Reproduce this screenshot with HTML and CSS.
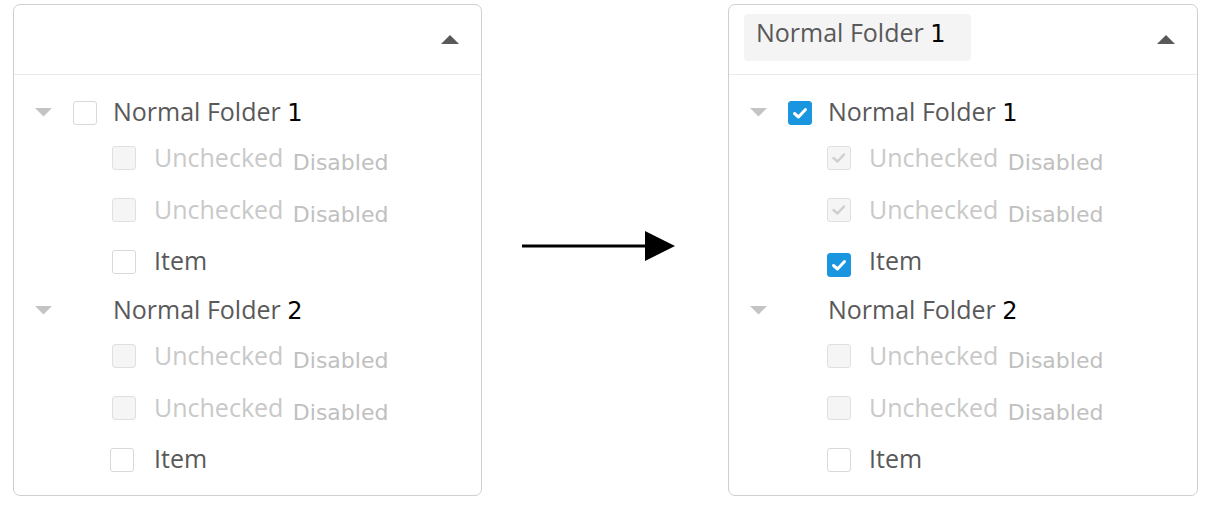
FILE: index.html
```html
<!DOCTYPE html>
<html>
<head>
<meta charset="utf-8">
<link rel="stylesheet" href="styles.css">
</head>
<body>
<div class="stage">
  <div class="panel">
    <div class="head">
      <div class="head-value"></div>
      <svg class="caret-up" width="18" height="10" viewBox="0 0 18 10"><path d="M0 10 L9 1 L18 10 Z" fill="#595959"/></svg>
    </div>
    <div class="tree">
      <div class="row folder">
        <svg class="caret-down" width="17" height="9" viewBox="0 0 17 9"><path d="M0 0 L17 0 L8.5 8.5 Z" fill="#c4c4c4"/></svg>
        <span class="cb"></span>
        <span class="label">Normal Folder <span class="num">1</span></span>
      </div>
      <div class="row child">
        <span class="cb dis"></span>
        <span class="label off">Unchecked <span class="dlab">Disabled</span></span>
      </div>
      <div class="row child">
        <span class="cb dis"></span>
        <span class="label off">Unchecked <span class="dlab">Disabled</span></span>
      </div>
      <div class="row child">
        <span class="cb"></span>
        <span class="label">Item</span>
      </div>
      <div class="row folder">
        <svg class="caret-down" width="17" height="9" viewBox="0 0 17 9"><path d="M0 0 L17 0 L8.5 8.5 Z" fill="#c4c4c4"/></svg>
        <span class="cb none"></span>
        <span class="label">Normal Folder <span class="num">2</span></span>
      </div>
      <div class="row child">
        <span class="cb dis"></span>
        <span class="label off">Unchecked <span class="dlab">Disabled</span></span>
      </div>
      <div class="row child">
        <span class="cb dis"></span>
        <span class="label off">Unchecked <span class="dlab">Disabled</span></span>
      </div>
      <div class="row child shift">
        <span class="cb"></span>
        <span class="label">Item</span>
      </div>
    </div>
  </div>

  <svg class="arrow" width="155" height="32" viewBox="0 0 155 32"><rect x="0" y="14.5" width="125" height="3" fill="#000"/><path d="M123 1 L153 16 L123 31 Z" fill="#000"/></svg>

  <div class="panel wide">
    <div class="head">
      <div class="head-value"><span class="tag">Normal Folder <span class="num">1</span></span></div>
      <svg class="caret-up" width="18" height="10" viewBox="0 0 18 10"><path d="M0 10 L9 1 L18 10 Z" fill="#595959"/></svg>
    </div>
    <div class="tree">
      <div class="row folder">
        <svg class="caret-down" width="17" height="9" viewBox="0 0 17 9"><path d="M0 0 L17 0 L8.5 8.5 Z" fill="#c4c4c4"/></svg>
        <span class="cb on"><svg width="24" height="24" viewBox="0 0 24 24"><path d="M6.5 12.5 L10.5 16 L17.5 8.5" fill="none" stroke="#fff" stroke-width="3" stroke-linecap="round" stroke-linejoin="round"/></svg></span>
        <span class="label">Normal Folder <span class="num">1</span></span>
      </div>
      <div class="row child">
        <span class="cb dis"><svg width="24" height="24" viewBox="0 0 24 24"><path d="M6.5 12 L10.5 15.5 L17 8.5" fill="none" stroke="#cfcfcf" stroke-width="2.5" stroke-linecap="round" stroke-linejoin="round"/></svg></span>
        <span class="label off">Unchecked <span class="dlab">Disabled</span></span>
      </div>
      <div class="row child">
        <span class="cb dis"><svg width="24" height="24" viewBox="0 0 24 24"><path d="M6.5 12 L10.5 15.5 L17 8.5" fill="none" stroke="#cfcfcf" stroke-width="2.5" stroke-linecap="round" stroke-linejoin="round"/></svg></span>
        <span class="label off">Unchecked <span class="dlab">Disabled</span></span>
      </div>
      <div class="row child">
        <span class="cb on low"><svg width="24" height="24" viewBox="0 0 24 24"><path d="M6.5 12.5 L10.5 16 L17.5 8.5" fill="none" stroke="#fff" stroke-width="3" stroke-linecap="round" stroke-linejoin="round"/></svg></span>
        <span class="label">Item</span>
      </div>
      <div class="row folder">
        <svg class="caret-down" width="17" height="9" viewBox="0 0 17 9"><path d="M0 0 L17 0 L8.5 8.5 Z" fill="#c4c4c4"/></svg>
        <span class="cb none"></span>
        <span class="label">Normal Folder <span class="num">2</span></span>
      </div>
      <div class="row child">
        <span class="cb dis"></span>
        <span class="label off">Unchecked <span class="dlab">Disabled</span></span>
      </div>
      <div class="row child">
        <span class="cb dis"></span>
        <span class="label off">Unchecked <span class="dlab">Disabled</span></span>
      </div>
      <div class="row child">
        <span class="cb"></span>
        <span class="label">Item</span>
      </div>
    </div>
  </div>
</div>
</body>
</html>
```

FILE: styles.css
```css
html, body {
  margin: 0;
  padding: 0;
  background: #ffffff;
}

body {
  font-family: "Open Sans", "Liberation Sans", sans-serif;
  color: #595959;
}

.stage {
  display: flex;
  align-items: flex-start;
  padding: 4px 0 0 13px;
}

.panel {
  width: 469px;
  height: 492px;
  box-sizing: border-box;
  border: 1px solid #cfcfcf;
  border-radius: 7px;
  display: flex;
  flex-direction: column;
  flex: none;
}

.panel.wide {
  width: 470px;
}

.head {
  height: 70px;
  box-sizing: border-box;
  border-bottom: 1px solid #ebebeb;
  display: flex;
  align-items: flex-start;
  padding: 9px 22px 0 15px;
}

.head-value {
  flex: 1;
  display: flex;
}

.tag {
  display: inline-block;
  height: 47px;
  box-sizing: border-box;
  padding: 3px 25px 0 12px;
  line-height: 30px;
  background: #f4f4f4;
  border-radius: 4px;
  font-size: 25px;
  color: #595959;
  white-space: nowrap;
}

.caret-up {
  display: block;
  margin-top: 20px;
}

.tree {
  padding-top: 15px;
  display: flex;
  flex-direction: column;
}

.row {
  display: flex;
  align-items: center;
  white-space: nowrap;
}

.row.folder {
  height: 42px;
  padding-left: 21px;
}

.row.child {
  height: 52px;
  padding-left: 98px;
}

.row.child.shift {
  padding-left: 96px;
}

.row.child.shift .cb {
  margin-right: 20px;
}

.caret-down {
  display: block;
  margin-right: 21px;
  margin-top: 2px;
}

.cb {
  width: 24px;
  height: 24px;
  box-sizing: border-box;
  border: 1px solid #d9d9d9;
  border-radius: 3px;
  background: #fff;
  flex: none;
  position: relative;
}

.cb svg {
  display: block;
  position: absolute;
  left: -1px;
  top: -1px;
}

.folder .cb {
  margin-right: 16px;
  margin-top: 3px;
}

.child .cb {
  margin-right: 18px;
  margin-top: -1px;
}

.cb.none {
  border-color: transparent;
  background: transparent;
}

.cb.dis {
  background: #f5f5f5;
  border-color: #e0e0e0;
}

.cb.on {
  background: #1a95e0;
  border-color: #1a95e0;
}

.cb.on.low {
  margin-top: 5px;
}

.label {
  font-size: 25px;
  line-height: 30px;
  color: #595959;
  padding-top: 2px;
}

.child .label {
  padding-top: 0;
  padding-bottom: 4px;
}

.child .label.off {
  color: #c9c9c9;
  padding-bottom: 0;
}

.dlab {
  font-family: "DejaVu Sans", "Liberation Sans", sans-serif;
  font-size: 22px;
  color: #c0c0c0;
  position: relative;
  top: 3px;
  margin-left: 3px;
}

.num {
  font-family: "DejaVu Sans", "Liberation Sans", sans-serif;
  font-size: 24px;
  color: #000;
}

.arrow {
  display: block;
  flex: none;
  margin: 226px 51px 0 40px;
}
```
